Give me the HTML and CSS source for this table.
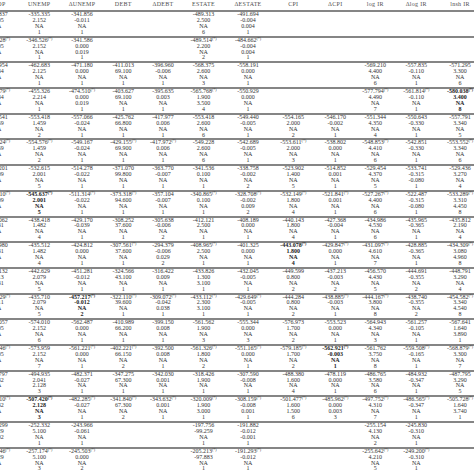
FILE: index.html
```html
<!DOCTYPE html>
<html>
<head>
<meta charset="utf-8">
<link rel="stylesheet" href="styles.css">
</head>
<body>
<div class="tbl">
  <div class="row hdr">
    <div class="c">ΔGDP</div><div class="c">UNEMP</div><div class="c">ΔUNEMP</div><div class="c">DEBT</div><div class="c">ΔDEBT</div><div class="c">ESTATE</div><div class="c">ΔESTATE</div><div class="c">CPI</div><div class="c">ΔCPI</div><div class="c">log IR</div><div class="c">Δlog IR</div><div class="c">lnsh IR</div>
  </div>

  <div class="row grp">
    <div class="c"><span>-341.837</span><span>0.005</span><span>NA</span><span>1</span></div>
    <div class="c"><span>-335.335</span><span>2.152</span><span>NA</span><span>1</span></div>
    <div class="c"><span>-341.856</span><span>-0.011</span><span>NA</span><span>1</span></div>
    <div class="c"></div>
    <div class="c"></div>
    <div class="c"><span>-489.313</span><span>2.500</span><span>NA</span><span>6</span></div>
    <div class="c"><span>-491.694</span><span>-0.004</span><span>0.004</span><span>1</span></div>
    <div class="c"></div><div class="c"></div><div class="c"></div><div class="c"></div><div class="c"></div>
  </div>

  <div class="row grp">
    <div class="c"><span>-340.528<sup>(*)</sup></span><span>0.005</span><span>NA</span><span>1</span></div>
    <div class="c"><span>-346.526<sup>(*)</sup></span><span>2.152</span><span>NA</span><span>1</span></div>
    <div class="c"><span>-341.586</span><span>0.000</span><span>0.019</span><span>1</span></div>
    <div class="c"></div>
    <div class="c"></div>
    <div class="c"><span>-489.514<sup>(*)</sup></span><span>2.200</span><span>NA</span><span>2</span></div>
    <div class="c"><span>-484.662<sup>(*)</sup></span><span>-0.004</span><span>0.004</span><span>1</span></div>
    <div class="c"></div><div class="c"></div><div class="c"></div><div class="c"></div><div class="c"></div>
  </div>

  <div class="row grp">
    <div class="c"><span>-460.954</span><span>2.034</span><span>NA</span><span>1</span></div>
    <div class="c"><span>-462.683</span><span>2.125</span><span>NA</span><span>1</span></div>
    <div class="c"><span>-471.180</span><span>0.000</span><span>NA</span><span>1</span></div>
    <div class="c"><span>-411.013</span><span>69.100</span><span>NA</span><span>1</span></div>
    <div class="c"><span>-396.960</span><span>-0.006</span><span>NA</span><span>1</span></div>
    <div class="c"><span>-568.375</span><span>2.600</span><span>NA</span><span>3</span></div>
    <div class="c"><span>-558.191</span><span>0.000</span><span>NA</span><span>1</span></div>
    <div class="c"></div>
    <div class="c"></div>
    <div class="c"><span>-569.210</span><span>4.400</span><span>NA</span><span>6</span></div>
    <div class="c"><span>-557.835</span><span>-0.110</span><span>NA</span><span>1</span></div>
    <div class="c"><span>-571.295</span><span>3.300</span><span>NA</span><span>6</span></div>
  </div>

  <div class="row grp">
    <div class="c"><span>-459.679<sup>(*)</sup></span><span>2.034</span><span>NA</span><span>1</span></div>
    <div class="c"><span>-455.326</span><span>2.214</span><span>NA</span><span>1</span></div>
    <div class="c"><span>-474.510<sup>(*)</sup></span><span>0.000</span><span>0.019</span><span>1</span></div>
    <div class="c"><span>-403.627</span><span>69.100</span><span>NA</span><span>1</span></div>
    <div class="c"><span>-395.635</span><span>0.003</span><span>NA</span><span>1</span></div>
    <div class="c"><span>-565.768<sup>(*)</sup></span><span>1.900</span><span>3.500</span><span>4</span></div>
    <div class="c"><span>-550.929</span><span>0.000</span><span>NA</span><span>1</span></div>
    <div class="c"></div>
    <div class="c"></div>
    <div class="c"><span>-577.794<sup>(*)</sup></span><span>4.490</span><span>NA</span><span>7</span></div>
    <div class="c"><span>-561.814<sup>(*)</sup></span><span>-0.110</span><span>NA</span><span>1</span></div>
    <div class="c b"><span>-580.038<sup>(*)</sup></span><span>3.400</span><span>NA</span><span>8</span></div>
  </div>

  <div class="row grp">
    <div class="c"><span>-551.541</span><span>1.459</span><span>NA</span><span>1</span></div>
    <div class="c"><span>-553.418</span><span>1.459</span><span>NA</span><span>2</span></div>
    <div class="c"><span>-557.066</span><span>-0.024</span><span>NA</span><span>1</span></div>
    <div class="c"><span>-425.762</span><span>66.800</span><span>NA</span><span>1</span></div>
    <div class="c"><span>-417.977</span><span>0.006</span><span>NA</span><span>1</span></div>
    <div class="c"><span>-553.418</span><span>2.600</span><span>NA</span><span>6</span></div>
    <div class="c"><span>-549.440</span><span>-0.005</span><span>NA</span><span>1</span></div>
    <div class="c"><span>-554.165</span><span>2.000</span><span>NA</span><span>2</span></div>
    <div class="c"><span>-546.170</span><span>-0.002</span><span>NA</span><span>1</span></div>
    <div class="c"><span>-551.344</span><span>4.350</span><span>NA</span><span>4</span></div>
    <div class="c"><span>-550.643</span><span>-0.330</span><span>NA</span><span>1</span></div>
    <div class="c"><span>-557.791</span><span>3.340</span><span>NA</span><span>5</span></div>
  </div>

  <div class="row grp">
    <div class="c"><span>-553.124<sup>(*)</sup></span><span>1.459</span><span>NA</span><span>1</span></div>
    <div class="c"><span>-554.576<sup>(*)</sup></span><span>1.459</span><span>NA</span><span>2</span></div>
    <div class="c"><span>-549.167</span><span>-0.024</span><span>NA</span><span>1</span></div>
    <div class="c"><span>-429.155<sup>(*)</sup></span><span>69.900</span><span>NA</span><span>1</span></div>
    <div class="c"><span>-417.972<sup>(*)</sup></span><span>0.006</span><span>NA</span><span>1</span></div>
    <div class="c"><span>-549.228</span><span>2.600</span><span>NA</span><span>6</span></div>
    <div class="c"><span>-542.689</span><span>-0.005</span><span>NA</span><span>1</span></div>
    <div class="c"><span>-553.611<sup>(*)</sup></span><span>2.000</span><span>NA</span><span>3</span></div>
    <div class="c"><span>-538.802</span><span>0.000</span><span>NA</span><span>1</span></div>
    <div class="c"><span>-548.853<sup>(*)</sup></span><span>4.410</span><span>NA</span><span>6</span></div>
    <div class="c"><span>-542.851</span><span>-0.330</span><span>NA</span><span>1</span></div>
    <div class="c"><span>-553.552<sup>(*)</sup></span><span>3.340</span><span>NA</span><span>6</span></div>
  </div>

  <div class="row grp">
    <div class="c"><span>-530.201</span><span>2.009</span><span>NA</span><span>1</span></div>
    <div class="c"><span>-532.615</span><span>2.001</span><span>NA</span><span>5</span></div>
    <div class="c"><span>-514.278</span><span>-0.022</span><span>NA</span><span>1</span></div>
    <div class="c"><span>-371.070</span><span>99.800</span><span>NA</span><span>1</span></div>
    <div class="c"><span>-363.770</span><span>-0.007</span><span>NA</span><span>1</span></div>
    <div class="c"><span>-341.536</span><span>0.100</span><span>NA</span><span>1</span></div>
    <div class="c"><span>-338.758</span><span>-0.002</span><span>NA</span><span>2</span></div>
    <div class="c"><span>-523.902</span><span>1.400</span><span>NA</span><span>5</span></div>
    <div class="c"><span>-514.852</span><span>0.001</span><span>NA</span><span>1</span></div>
    <div class="c"><span>-529.454</span><span>4.370</span><span>NA</span><span>5</span></div>
    <div class="c"><span>-533.741</span><span>-0.315</span><span>-0.080</span><span>1</span></div>
    <div class="c"><span>-529.436</span><span>3.270</span><span>NA</span><span>4</span></div>
  </div>

  <div class="row grp">
    <div class="c"><span>-543.510<sup>(*)</sup></span><span>2.009</span><span>NA</span><span>1</span></div>
    <div class="c b"><span>-545.637<sup>(*)</sup></span><span>2.001</span><span>NA</span><span>5</span></div>
    <div class="c"><span>-511.314<sup>(*)</sup></span><span>-0.022</span><span>NA</span><span>1</span></div>
    <div class="c"><span>-373.318<sup>(*)</sup></span><span>94.600</span><span>NA</span><span>1</span></div>
    <div class="c"><span>-357.104</span><span>-0.007</span><span>NA</span><span>1</span></div>
    <div class="c"><span>-340.865<sup>(*)</sup></span><span>0.100</span><span>NA</span><span>1</span></div>
    <div class="c"><span>-328.708<sup>(*)</sup></span><span>-0.002</span><span>0.009</span><span>2</span></div>
    <div class="c"><span>-532.149<sup>(*)</sup></span><span>1.800</span><span>NA</span><span>4</span></div>
    <div class="c"><span>-521.841<sup>(*)</sup></span><span>0.001</span><span>NA</span><span>1</span></div>
    <div class="c"><span>-527.267<sup>(*)</sup></span><span>4.400</span><span>NA</span><span>6</span></div>
    <div class="c"><span>-522.487</span><span>-0.315</span><span>-0.080</span><span>1</span></div>
    <div class="c"><span>-533.289<sup>(*)</sup></span><span>3.310</span><span>4.450</span><span>8</span></div>
  </div>

  <div class="row grp">
    <div class="c"><span>-436.062</span><span>1.431</span><span>NA</span><span>1</span></div>
    <div class="c"><span>-438.418</span><span>1.482</span><span>NA</span><span>4</span></div>
    <div class="c"><span>-429.170</span><span>-0.039</span><span>NA</span><span>1</span></div>
    <div class="c"><span>-308.252</span><span>37.600</span><span>NA</span><span>1</span></div>
    <div class="c"><span>-305.638</span><span>-0.006</span><span>NA</span><span>2</span></div>
    <div class="c"><span>-412.121</span><span>2.500</span><span>NA</span><span>1</span></div>
    <div class="c"><span>-408.189</span><span>0.000</span><span>NA</span><span>1</span></div>
    <div class="c"><span>-440.143</span><span>1.800</span><span>NA</span><span>4</span></div>
    <div class="c"><span>-427.368</span><span>-0.004</span><span>NA</span><span>1</span></div>
    <div class="c"><span>-434.986</span><span>4.530</span><span>NA</span><span>6</span></div>
    <div class="c"><span>-435.965</span><span>-0.365</span><span>NA</span><span>1</span></div>
    <div class="c"><span>-435.812</span><span>2.190</span><span>NA</span><span>4</span></div>
  </div>

  <div class="row grp">
    <div class="c"><span>-433.980</span><span>1.431</span><span>NA</span><span>1</span></div>
    <div class="c"><span>-435.512</span><span>1.482</span><span>NA</span><span>4</span></div>
    <div class="c"><span>-424.812</span><span>0.000</span><span>NA</span><span>1</span></div>
    <div class="c"><span>-307.561<sup>(*)</sup></span><span>37.600</span><span>NA</span><span>1</span></div>
    <div class="c"><span>-294.379</span><span>-0.006</span><span>0.029</span><span>2</span></div>
    <div class="c"><span>-408.965<sup>(*)</sup></span><span>2.500</span><span>NA</span><span>1</span></div>
    <div class="c"><span>-401.325</span><span>0.000</span><span>NA</span><span>1</span></div>
    <div class="c b"><span>-443.078<sup>(*)</sup></span><span>1.800</span><span>NA</span><span>4</span></div>
    <div class="c"><span>-429.847<sup>(*)</sup></span><span>0.000</span><span>NA</span><span>1</span></div>
    <div class="c"><span>-431.097<sup>(*)</sup></span><span>4.610</span><span>NA</span><span>7</span></div>
    <div class="c"><span>-428.885</span><span>-0.365</span><span>NA</span><span>1</span></div>
    <div class="c"><span>-434.309<sup>(*)</sup></span><span>3.080</span><span>4.960</span><span>8</span></div>
  </div>

  <div class="row grp">
    <div class="c"><span>-440.132</span><span>2.013</span><span>0.031</span><span>1</span></div>
    <div class="c"><span>-442.629</span><span>2.079</span><span>NA</span><span>5</span></div>
    <div class="c"><span>-451.281</span><span>-0.012</span><span>NA</span><span>1</span></div>
    <div class="c"><span>-324.566</span><span>43.100</span><span>NA</span><span>1</span></div>
    <div class="c"><span>-316.422</span><span>0.009</span><span>NA</span><span>1</span></div>
    <div class="c"><span>-433.826</span><span>1.300</span><span>3.100</span><span>1</span></div>
    <div class="c"><span>-432.045</span><span>-0.005</span><span>NA</span><span>1</span></div>
    <div class="c"><span>-449.599</span><span>0.800</span><span>NA</span><span>2</span></div>
    <div class="c"><span>-437.213</span><span>-0.003</span><span>NA</span><span>2</span></div>
    <div class="c"><span>-456.570</span><span>4.430</span><span>NA</span><span>5</span></div>
    <div class="c"><span>-444.691</span><span>-0.355</span><span>NA</span><span>2</span></div>
    <div class="c"><span>-448.791</span><span>3.290</span><span>NA</span><span>4</span></div>
  </div>

  <div class="row grp">
    <div class="c"><span>-437.629<sup>(*)</sup></span><span>2.011</span><span>NA</span><span>1</span></div>
    <div class="c"><span>-435.710</span><span>2.079</span><span>NA</span><span>5</span></div>
    <div class="c b"><span>-457.217<sup>(*)</sup></span><span>-0.012</span><span>NA</span><span>2</span></div>
    <div class="c"><span>-322.110<sup>(*)</sup></span><span>39.600</span><span>NA</span><span>1</span></div>
    <div class="c"><span>-309.072<sup>(*)</sup></span><span>-0.042</span><span>0.038</span><span>1</span></div>
    <div class="c"><span>-433.112<sup>(*)</sup></span><span>2.300</span><span>3.100</span><span>1</span></div>
    <div class="c"><span>-429.649<sup>(*)</sup></span><span>-0.005</span><span>NA</span><span>1</span></div>
    <div class="c"><span>-444.284</span><span>0.800</span><span>NA</span><span>2</span></div>
    <div class="c"><span>-438.885<sup>(*)</sup></span><span>-0.003</span><span>NA</span><span>1</span></div>
    <div class="c"><span>-444.167<sup>(*)</sup></span><span>3.800</span><span>NA</span><span>8</span></div>
    <div class="c"><span>-438.740</span><span>-0.355</span><span>NA</span><span>2</span></div>
    <div class="c"><span>-454.582<sup>(*)</sup></span><span>3.340</span><span>4.540</span><span>8</span></div>
  </div>

  <div class="row grp">
    <div class="c"><span>-572.057</span><span>2.105</span><span>NA</span><span>1</span></div>
    <div class="c"><span>-574.010</span><span>2.152</span><span>NA</span><span>6</span></div>
    <div class="c"><span>-562.487</span><span>0.000</span><span>NA</span><span>1</span></div>
    <div class="c"><span>-410.989</span><span>66.200</span><span>NA</span><span>1</span></div>
    <div class="c"><span>-399.150</span><span>0.008</span><span>NA</span><span>1</span></div>
    <div class="c"><span>-561.562</span><span>1.900</span><span>NA</span><span>3</span></div>
    <div class="c"><span>-555.344</span><span>0.000</span><span>NA</span><span>3</span></div>
    <div class="c"><span>-576.973</span><span>1.700</span><span>NA</span><span>2</span></div>
    <div class="c"><span>-553.523</span><span>0.000</span><span>NA</span><span>1</span></div>
    <div class="c"><span>-564.943</span><span>4.340</span><span>NA</span><span>3</span></div>
    <div class="c"><span>-561.257</span><span>-0.105</span><span>NA</span><span>1</span></div>
    <div class="c"><span>-567.641</span><span>1.640</span><span>3.890</span><span>1</span></div>
  </div>

  <div class="row grp">
    <div class="c"><span>-571.846<sup>(*)</sup></span><span>2.105</span><span>NA</span><span>1</span></div>
    <div class="c"><span>-573.959</span><span>2.152</span><span>NA</span><span>7</span></div>
    <div class="c"><span>-561.221<sup>(*)</sup></span><span>0.000</span><span>NA</span><span>1</span></div>
    <div class="c"><span>-402.221<sup>(*)</sup></span><span>66.150</span><span>NA</span><span>2</span></div>
    <div class="c"><span>-392.500</span><span>0.008</span><span>NA</span><span>1</span></div>
    <div class="c"><span>-561.326<sup>(*)</sup></span><span>1.800</span><span>NA</span><span>2</span></div>
    <div class="c"><span>-551.165<sup>(*)</sup></span><span>0.000</span><span>NA</span><span>1</span></div>
    <div class="c"><span>-579.185<sup>(*)</sup></span><span>1.700</span><span>NA</span><span>2</span></div>
    <div class="c b"><span>-562.921<sup>(*)</sup></span><span>-0.003</span><span>NA</span><span>1</span></div>
    <div class="c"><span>-561.762</span><span>3.750</span><span>NA</span><span>8</span></div>
    <div class="c"><span>-559.508<sup>(*)</sup></span><span>-0.165</span><span>NA</span><span>1</span></div>
    <div class="c"><span>-568.879<sup>(*)</sup></span><span>3.300</span><span>NA</span><span>7</span></div>
  </div>

  <div class="row grp">
    <div class="c"><span>-492.797</span><span>2.032</span><span>NA</span><span>1</span></div>
    <div class="c"><span>-494.935</span><span>2.041</span><span>2.128</span><span>3</span></div>
    <div class="c"><span>-482.371</span><span>-0.027</span><span>NA</span><span>1</span></div>
    <div class="c"><span>-347.275</span><span>67.300</span><span>NA</span><span>1</span></div>
    <div class="c"><span>-342.030</span><span>0.001</span><span>NA</span><span>1</span></div>
    <div class="c"><span>-318.426</span><span>1.900</span><span>NA</span><span>1</span></div>
    <div class="c"><span>-307.590</span><span>-0.008</span><span>NA</span><span>1</span></div>
    <div class="c"><span>-488.380</span><span>1.600</span><span>NA</span><span>4</span></div>
    <div class="c"><span>-478.119</span><span>0.000</span><span>NA</span><span>1</span></div>
    <div class="c"><span>-486.765</span><span>3.580</span><span>NA</span><span>6</span></div>
    <div class="c"><span>-484.932</span><span>-0.347</span><span>NA</span><span>1</span></div>
    <div class="c"><span>-487.795</span><span>3.290</span><span>NA</span><span>5</span></div>
  </div>

  <div class="row grp">
    <div class="c"><span>-505.110<sup>(*)</sup></span><span>2.032</span><span>NA</span><span>1</span></div>
    <div class="c b"><span>-507.420<sup>(*)</sup></span><span>2.128</span><span>NA</span><span>3</span></div>
    <div class="c"><span>-482.285<sup>(*)</sup></span><span>-0.027</span><span>NA</span><span>1</span></div>
    <div class="c"><span>-341.840<sup>(*)</sup></span><span>67.300</span><span>NA</span><span>2</span></div>
    <div class="c"><span>-343.632<sup>(*)</sup></span><span>0.001</span><span>NA</span><span>1</span></div>
    <div class="c"><span>-320.009<sup>(*)</sup></span><span>1.900</span><span>3.000</span><span>1</span></div>
    <div class="c"><span>-308.159<sup>(*)</sup></span><span>-0.008</span><span>0.001</span><span>1</span></div>
    <div class="c"><span>-501.477<sup>(*)</sup></span><span>1.600</span><span>1.500</span><span>6</span></div>
    <div class="c"><span>-485.962<sup>(*)</sup></span><span>0.000</span><span>0.003</span><span>3</span></div>
    <div class="c"><span>-497.752<sup>(*)</sup></span><span>4.310</span><span>NA</span><span>7</span></div>
    <div class="c"><span>-486.565<sup>(*)</sup></span><span>-0.347</span><span>NA</span><span>1</span></div>
    <div class="c"><span>-505.728<sup>(*)</sup></span><span>1.640</span><span>3.740</span><span>1</span></div>
  </div>

  <div class="row grp">
    <div class="c"><span>-250.299</span><span>5.029</span><span>0.002</span><span>1</span></div>
    <div class="c"><span>-252.332</span><span>5.100</span><span>NA</span><span>1</span></div>
    <div class="c"><span>-243.966</span><span>-0.061</span><span>NA</span><span>1</span></div>
    <div class="c"></div>
    <div class="c"></div>
    <div class="c"><span>-197.756</span><span>-99.259</span><span>NA</span><span>1</span></div>
    <div class="c"><span>-191.882</span><span>-0.012</span><span>-0.001</span><span>1</span></div>
    <div class="c"></div>
    <div class="c"></div>
    <div class="c"><span>-255.154</span><span>4.130</span><span>NA</span><span>2</span></div>
    <div class="c"><span>-245.830</span><span>-0.310</span><span>NA</span><span>1</span></div>
    <div class="c"></div>
  </div>

  <div class="row grp">
    <div class="c"><span>-255.646<sup>(*)</sup></span><span>5.029</span><span>NA</span><span>1</span></div>
    <div class="c"><span>-257.174<sup>(*)</sup></span><span>5.100</span><span>NA</span><span>3</span></div>
    <div class="c"><span>-245.503<sup>(*)</sup></span><span>0.000</span><span>NA</span><span>2</span></div>
    <div class="c"></div>
    <div class="c"></div>
    <div class="c"><span>-205.213<sup>(*)</sup></span><span>-97.883</span><span>NA</span><span>1</span></div>
    <div class="c"><span>-191.293<sup>(*)</sup></span><span>-0.012</span><span>NA</span><span>1</span></div>
    <div class="c"></div>
    <div class="c"></div>
    <div class="c"><span>-255.642<sup>(*)</sup></span><span>4.210</span><span>NA</span><span>5</span></div>
    <div class="c"><span>-249.200<sup>(*)</sup></span><span>-0.310</span><span>NA</span><span>1</span></div>
    <div class="c"></div>
  </div>
</div>
</body>
</html>
```

FILE: styles.css
```css
html, body {
  margin: 0;
  padding: 0;
  background: #ffffff;
}

body {
  width: 474px;
  height: 474px;
  overflow: hidden;
  font-family: "Liberation Serif", "Times New Roman", serif;
  font-size: 6px;
  color: #333333;
}

.tbl {
  margin-left: -23.5px;
  width: 506px;
}

.row {
  display: grid;
  grid-template-columns: 41px 43.5px 42px 40.5px 39px 42px 47px 43.5px 40.5px 39.5px 42.5px 45px;
}

.hdr {
  height: 10px;
  line-height: 8.5px;
  color: #505050;
  letter-spacing: 0.3px;
}

.grp {
  border-top: 2px solid #858585;
}

.c {
  text-align: center;
  white-space: nowrap;
}

.c span {
  display: block;
  height: 5.925px;
  line-height: 5.925px;
}

.b {
  font-weight: bold;
  color: #1a1a1a;
}

sup {
  font-size: 4px;
  line-height: 0;
  vertical-align: 2.5px;
}
```
